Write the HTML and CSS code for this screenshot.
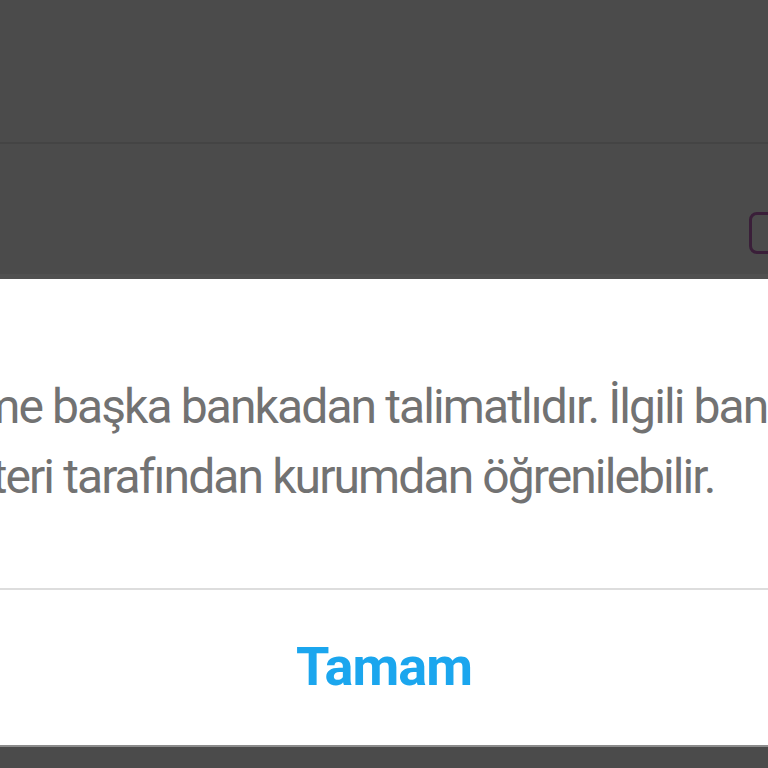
FILE: index.html
```html
<!DOCTYPE html>
<html lang="tr">
<head>
    <meta charset="UTF-8">
    <meta name="viewport" content="width=device-width, initial-scale=1.0">
    <title>Talimat Bilgisi</title>
    <link rel="stylesheet" href="styles.css">
</head>
<body>

    <div class="backdrop">
        <div class="row row-top"></div>
        <div class="row row-mid">
            <span class="chip"></span>
        </div>
    </div>

    <div class="dialog">
        <div class="message">
            <p>ödeme başka bankadan talimatlıdır. İlgili banka bilgisi<br>müşteri tarafından kurumdan öğrenilebilir.</p>
        </div>
        <button class="action">Tamam</button>
    </div>

    <div class="footer-strip"></div>

</body>
</html>
```

FILE: styles.css
```css
html, body {
    margin: 0;
    height: 768px;
    overflow: hidden;
}
body {
    background-color: #4b4b4b;
    font-family: Roboto, "Liberation Sans", sans-serif;
}
.backdrop {
    height: 279px;
    display: flex;
    flex-direction: column;
}
.row-top {
    height: 142px;
    border-bottom: 2px solid #444444;
}
.row-mid {
    flex: 1;
    display: flex;
    justify-content: flex-end;
    align-items: flex-start;
    padding-top: 68px;
    border-bottom: 5px solid #505050;
    box-sizing: border-box;
}
.chip {
    width: 24px;
    height: 36px;
    margin-right: -11px;
    border: 3px solid #3a1f39;
    border-radius: 8px;
}
.dialog {
    height: 466px;
    background: white;
    display: flex;
    flex-direction: column;
    overflow: hidden;
}
.message {
    height: 311px;
    border-bottom: 2px solid #dddddd;
    box-sizing: border-box;
    padding-top: 93px;
}
.message p {
    margin: 0 0 0 -96px;
    white-space: nowrap;
    font-size: 48px;
    line-height: 70px;
    letter-spacing: -1.9px;
    color: #727272;
}
.action {
    flex: 1;
    border: none;
    background: none;
    font-family: Roboto, "Liberation Sans", sans-serif;
    font-weight: bold;
    font-size: 54px;
    letter-spacing: -1px;
    color: #1ba6ee;
    padding: 0 0 2px;
    cursor: pointer;
}
.footer-strip {
    height: 23px;
    border-top: 2px solid #8c8c8c;
    box-sizing: border-box;
    background: #4b4b4b;
}
```
